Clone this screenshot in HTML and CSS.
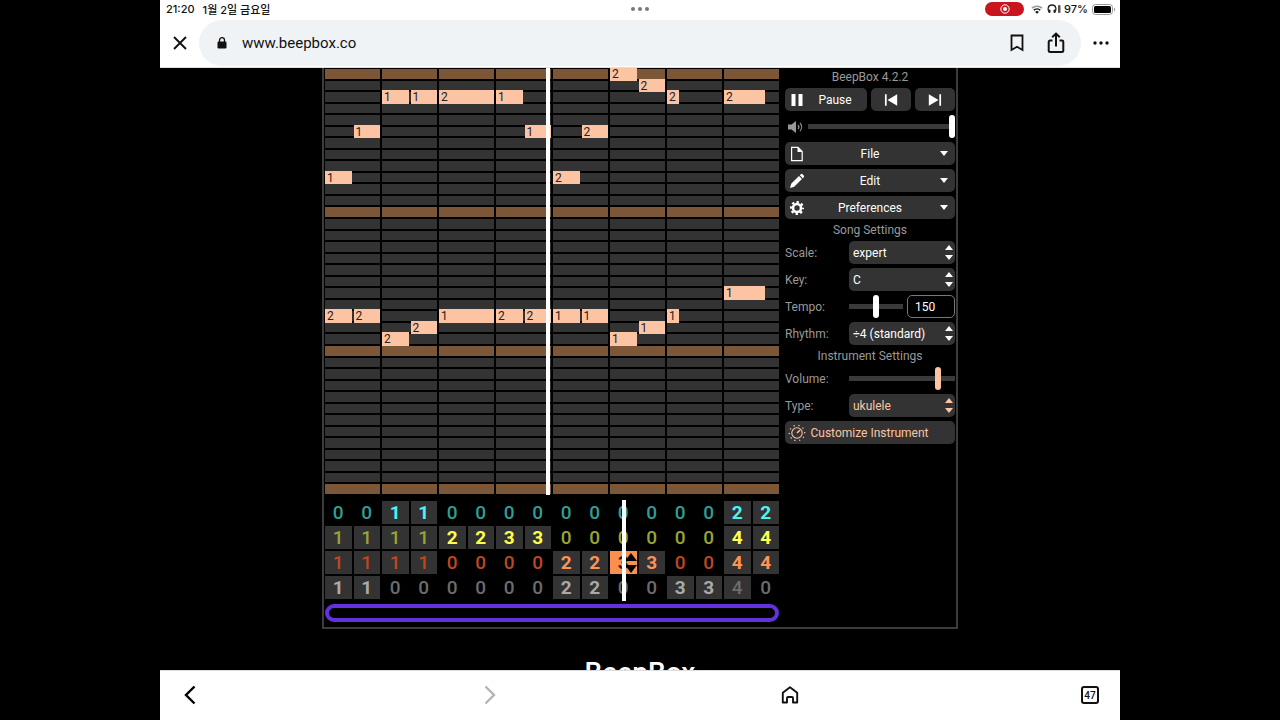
FILE: index.html
```html
<!DOCTYPE html>
<html lang="ko">
<head>
  <meta charset="UTF-8">
  <title>BeepBox</title>
  <link rel="stylesheet" href="styles.css">
</head>
<body>
  <div class="device">
    <div class="status">
      <span class="clock">21:20</span>
      <span>1월 2일 금요일</span>
      <svg class="multitask" width="20" height="6" viewBox="0 0 20 6" fill="#77787a"><circle cx="3" cy="3" r="2"/><circle cx="10" cy="3" r="2"/><circle cx="17" cy="3" r="2"/></svg>
      <span class="recording"><svg width="10" height="10" viewBox="0 0 10 10"><circle cx="5" cy="5" r="4.2" fill="none" stroke="#fff"/><circle cx="5" cy="5" r="2" fill="#fff"/></svg></span>
      <svg class="wifi" width="12" height="9" viewBox="0 0 12 9" fill="none" stroke-width="1.6"><path d="M1 3.2a7.2 7.2 0 0 1 10 0" stroke="#999"/><path d="M2.8 5.3a4.6 4.6 0 0 1 6.4 0" stroke="#111"/><path d="M6 8.8L4.2 7a2.5 2.5 0 0 1 3.6 0z" fill="#111"/></svg>
      <svg class="headphones" width="14" height="10" viewBox="0 0 14 10"><path d="M2.6 8.5C.2 6 .6 1 5 1s4.800 5 2.400 7.500" fill="none" stroke="#222" stroke-width="1.300"/><rect x="1.500" y="5.500" width="2" height="3.500" rx="1" fill="#222"/><rect x="6.500" y="5.500" width="2" height="3.500" rx="1" fill="#222"/><rect x="11" y="1" width="2.500" height="8" rx="1" fill="#555"/></svg>
      <span>97%</span>
      <svg class="battery" width="24" height="11" viewBox="0 0 24 11"><rect x=".5" y=".5" width="20" height="10" rx="3" fill="#fff" stroke="#999"/><rect x="2" y="2" width="17" height="7" rx="1.500" fill="#000"/><path d="M22 3.500c1.500.8 1.500 3.200 0 4z" fill="#999"/></svg>
    </div>

    <div class="toolbar">
      <button class="plain" aria-label="닫기"><svg width="16" height="16" viewBox="0 0 16 16" fill="none" stroke="#111" stroke-width="1.900"><path d="M2 2l12 12M14 2L2 14"/></svg></button>
      <div class="address">
        <svg width="10" height="12" viewBox="0 0 10 12"><rect x=".5" y="4.500" width="9" height="7" rx="1.200" fill="#111"/><path d="M2.500 5V3.200a2.500 2.500 0 0 1 5 0V5" fill="none" stroke="#111" stroke-width="1.300"/></svg>
        <input class="url" type="text" value="www.beepbox.co" aria-label="주소">
        <button class="plain" aria-label="북마크"><svg width="14" height="18" viewBox="0 0 14 18" fill="none" stroke="#111" stroke-width="1.800"><path d="M1.500 1.500h11v14.500L7 12.800 1.500 16z"/></svg></button>
        <button class="plain" aria-label="공유"><svg width="18" height="22" viewBox="0 0 18 22" fill="none" stroke="#111" stroke-width="2"><path d="M5.500 8.500H3a1.300 1.300 0 0 0-1.300 1.300V18.500A1.500 1.500 0 0 0 3.200 20h11.600a1.500 1.500 0 0 0 1.500-1.500V9.800A1.300 1.300 0 0 0 15 8.500h-2.500M9 14.500V2M5.200 5.300L9 1.600l3.800 3.700"/></svg></button>
      </div>
      <button class="plain" aria-label="더보기"><svg width="16" height="4" viewBox="0 0 16 4" fill="#111"><circle cx="2" cy="2" r="1.700"/><circle cx="8" cy="2" r="1.700"/><circle cx="14" cy="2" r="1.700"/></svg></button>
    </div>

    <main class="page">
      <div class="beepbox">
        <div class="editor">
          <div class="pattern" id="pattern"><div class="playhead pattern-head"></div></div>
          <div class="tracks" id="tracks"><div class="playhead track-head"></div></div>
          <div class="loop"></div>
        </div>

        <div class="settings">
          <div class="heading">BeepBox 4.2.2</div>
          <div class="row">
            <button class="btn pause"><svg width="12" height="14" viewBox="0 0 12 14" fill="#fff"><path d="M.5 1h4v12h-4zM7.500 1h4v12h-4z"/></svg><span>Pause</span></button>
            <button class="btn skip" aria-label="Previous bar"><svg width="14" height="14" viewBox="0 0 12 12" fill="#fff"><path d="M.8 1h1.500v10H.8zM11.300 1v10L3 6z"/></svg></button>
            <button class="btn skip" aria-label="Next bar"><svg width="14" height="14" viewBox="0 0 12 12" fill="#fff"><path d="M9.700 1h1.500v10H9.700zM.7 1v10L9 6z"/></svg></button>
          </div>
          <div class="row">
            <svg class="speaker" width="19" height="16" viewBox="0 0 19 16"><path d="M3 5.500h3.500L11 2v12l-4.500-3.500H3z" fill="#999"/><path d="M13 6a3 3 0 0 1 0 4M15 3.800a6.500 6.500 0 0 1 0 8.400" fill="none" stroke="#888" stroke-width="1.300"/></svg>
            <input class="range" type="range" min="0" max="100" value="100" aria-label="Main volume">
          </div>
          <div class="menu">
            <svg class="icon" width="16" height="16" viewBox="0 0 16 16"><path d="M2.600 1.300h6.400L13.200 5.500v9.200H2.600z" fill="none" stroke="#fff" stroke-width="1.200"/><path d="M8.500 1v5h5z" fill="#fff"/></svg>
            <select aria-label="File"><option>File</option></select>
            <svg class="caret" width="8" height="5" viewBox="0 0 8 5"><path d="M0 0h8L4 5z" fill="#fff"/></svg>
          </div>
          <div class="menu">
            <svg class="icon" width="16" height="16" viewBox="0 0 16 16" fill="#fff"><path d="M1 15l1.200-4.200L10 3l3 3-7.800 7.800zM10.800 2.200l1-1a1.200 1.200 0 0 1 1.700 0l1.300 1.300a1.200 1.200 0 0 1 0 1.700l-1 1z"/></svg>
            <select aria-label="Edit"><option>Edit</option></select>
            <svg class="caret" width="8" height="5" viewBox="0 0 8 5"><path d="M0 0h8L4 5z" fill="#fff"/></svg>
          </div>
          <div class="menu">
            <svg class="icon" width="16" height="16" viewBox="0 0 16 16" fill="none" stroke="#fff"><circle cx="8" cy="8" r="4" stroke-width="2.600"/><circle cx="8" cy="8" r="6" stroke-width="2" stroke-dasharray="2.400 2.312" stroke-dashoffset="1.200"/></svg>
            <select aria-label="Preferences"><option>Preferences</option></select>
            <svg class="caret" width="8" height="5" viewBox="0 0 8 5"><path d="M0 0h8L4 5z" fill="#fff"/></svg>
          </div>

          <div class="heading">Song Settings</div>
          <div class="row">
            <label for="scale">Scale:</label>
            <div class="select"><select id="scale"><option>expert</option></select><svg class="arrows" width="8" height="15" viewBox="0 0 8 15"><path d="M0 5h8L4 0zM0 10h8l-4 5z"/></svg></div>
          </div>
          <div class="row">
            <label for="key">Key:</label>
            <div class="select"><select id="key"><option>C</option></select><svg class="arrows" width="8" height="15" viewBox="0 0 8 15"><path d="M0 5h8L4 0zM0 10h8l-4 5z"/></svg></div>
          </div>
          <div class="row">
            <label for="tempo">Tempo:</label>
            <input class="range" type="range" min="0" max="100" value="50" aria-label="Tempo slider">
            <input class="number" id="tempo" type="text" value="150">
          </div>
          <div class="row">
            <label for="rhythm">Rhythm:</label>
            <div class="select"><select id="rhythm"><option>÷4 (standard)</option></select><svg class="arrows" width="8" height="15" viewBox="0 0 8 15"><path d="M0 5h8L4 0zM0 10h8l-4 5z"/></svg></div>
          </div>

          <div class="heading">Instrument Settings</div>
          <div class="row">
            <label for="volume">Volume:</label>
            <input class="range instrument" id="volume" type="range" min="0" max="100" value="86">
          </div>
          <div class="row">
            <label for="type">Type:</label>
            <div class="select instrument"><select id="type"><option>ukulele</option></select><svg class="arrows" width="8" height="15" viewBox="0 0 8 15"><path d="M0 5h8L4 0zM0 10h8l-4 5z"/></svg></div>
          </div>
          <button class="btn customize"><svg width="18" height="18" viewBox="0 0 18 18" fill="none" stroke="#fdc4a4"><circle cx="9" cy="9" r="5.200" stroke-width="1.100"/><path d="M9 9l2.800-2.800" stroke-width="1.500"/><circle cx="9" cy="9" r="7.700" stroke-width="1.300" stroke-dasharray="1.300 3.538" transform="rotate(135 9 9)"/></svg><span>Customize Instrument</span></button>
        </div>
      </div>
      <h1>BeepBox</h1>
    </main>

    <nav class="bottom">
      <button class="plain" aria-label="뒤로"><svg width="20" height="22" viewBox="0 0 20 22" fill="none" stroke="#000" stroke-width="2.400"><path d="M14.500 2.500L6 11l8.500 8.500"/></svg></button>
      <button class="plain" aria-label="앞으로"><svg width="20" height="22" viewBox="0 0 20 22" fill="none" stroke="#b4b4b4" stroke-width="2.400"><path d="M5.500 2.500L14 11l-8.500 8.500"/></svg></button>
      <button class="plain" aria-label="홈"><svg width="18" height="18" viewBox="0 0 18 18" fill="none" stroke="#111" stroke-width="1.900" stroke-linejoin="round"><path d="M1.800 6.700L9 1.300l7.200 5.400V16.500h-4.200v-4.500a1 1 0 0 0-1-1H7a1 1 0 0 0-1 1v4.500H1.800z"/></svg></button>
      <button class="plain tabs" aria-label="탭 47개">47</button>
    </nav>
  </div>

  <script>
    const ROWS = 37;
    const BEATS = 8;

    // [pitch row, start, length] in quarter beats, then the instrument number
    const notes = [
      [9, 0, 2, 1], [5, 2, 2, 1], [2, 4, 2, 1], [2, 6, 2, 1], [2, 8, 4, 2],
      [2, 12, 2, 1], [5, 14, 2, 1], [9, 16, 2, 2], [5, 18, 2, 2],
      [0, 20, 2, 2], [1, 22, 2, 2], [2, 24, 1, 2], [2, 28, 3, 2],
      [21, 0, 2, 2], [21, 2, 2, 2], [23, 4, 2, 2], [22, 6, 2, 2], [21, 8, 4, 1],
      [21, 12, 2, 2], [21, 14, 2, 2], [21, 16, 2, 1], [21, 18, 2, 1],
      [23, 20, 2, 1], [22, 22, 2, 1], [21, 24, 1, 1], [19, 28, 3, 1]
    ];

    // bars per channel; "on" marks the bars that are drawn bright
    const channels = [
      { name: 'pitch1', bars: '0011000000000022', on: '0011000000000011' },
      { name: 'pitch2', bars: '1111223300000044', on: '0000111100000011' },
      { name: 'pitch3', bars: '1111000022330044', on: '0000000011110011' },
      { name: 'noise',  bars: '1100000022003340', on: '1100000011001100' }
    ];
    const selected = { channel: 2, bar: 10 };

    const pattern = document.getElementById('pattern');
    for (let r = 0; r < ROWS; r++) {
      for (let b = 0; b < BEATS; b++) {
        const cell = document.createElement('div');
        cell.className = r % 12 === 0 ? 'cell root' : 'cell';
        cell.style.gridArea = `${r + 1} / ${b * 4 + 1} / span 1 / span 4`;
        pattern.append(cell);
      }
    }
    for (const [row, start, length, instrument] of notes) {
      const note = document.createElement('div');
      note.className = 'note';
      note.textContent = instrument;
      note.style.gridArea = `${row + 1} / ${start + 1} / span 1 / span ${length}`;
      pattern.append(note);
    }

    const tracks = document.getElementById('tracks');
    channels.forEach((channel, c) => {
      [...channel.bars].forEach((bar, i) => {
        const button = document.createElement('button');
        button.className = `bar ${channel.name}`;
        if (bar !== '0') button.classList.add('filled');
        if (channel.on[i] === '1') button.classList.add('on');
        button.textContent = bar;
        if (c === selected.channel && i === selected.bar) {
          button.classList.add('selected');
          button.innerHTML += '<svg class="spinner" width="12" height="20" viewBox="0 0 12 20"><path d="M0 8h12L6 0zM0 12h12l-6 8z"/></svg>';
        }
        tracks.append(button);
      });
    });
  </script>
</body>
</html>
```
FILE: styles.css
```css
* { box-sizing: border-box; }
body { margin: 0; background: #000; font-family: Roboto, "Noto Sans CJK KR", sans-serif; font-size: 12px; }
button, input, select { font: inherit; color: inherit; margin: 0; }
svg { display: block; flex: none; }
.device { width: 75%; height: 100vh; margin: 0 auto; display: flex; flex-direction: column; background: #fff; color: #111; }
.plain { display: flex; align-items: center; justify-content: center; padding: 0; border: 0; background: none; }

/* iPad status bar */
.status { position: relative; height: 18px; padding: 0 4px 0 6px; display: flex; align-items: center; font-family: Inter, "Noto Sans CJK KR", sans-serif; font-size: 11px; font-weight: 500; }
.clock { margin-right: 8px; }
.multitask { position: absolute; left: 50%; top: 6px; transform: translateX(-50%); }
.recording { margin-left: auto; width: 39px; height: 14px; border-radius: 7px; background: #c9151e; display: flex; align-items: center; justify-content: center; }
.wifi { margin: 0 4px 0 7px; }
.headphones { margin-right: 3px; }
.battery { margin-left: 4px; }

/* browser toolbar */
.toolbar { display: grid; grid-template-columns: 39px 1fr 39px; height: 50px; padding: 2px 0; border-bottom: 1px solid #ddd; }
.address { display: flex; align-items: center; gap: 15px; height: 46px; padding: 0 13px 0 18px; border-radius: 23px; background: #eff3f5; }
.address .plain { width: 24px; height: 24px; }
.url { flex: 1; min-width: 0; padding: 0; border: 0; background: none; font-size: 15px; }

.page { flex: 1; min-height: 0; overflow: hidden; background: #000; color: #fff; }
.beepbox { display: grid; grid-template-columns: 1fr 170px; gap: 4px; max-width: 636px; margin: 0 auto; padding: 0 1px; border: 2px solid #3c3c3c; border-top: 0; }
h1 { margin: 29px 0 0; font-size: 28px; font-weight: 500; line-height: 30px; text-align: center; }

.editor { padding-bottom: 5px; }
.pattern { position: relative; display: grid; grid-template-columns: repeat(32, 1fr); grid-template-rows: repeat(37, minmax(0, 1fr)); height: 427px; }
.cell { margin: 1px 2px 1px 0; background: #333; }
.root { background: #7b5637; }
.note { margin: -1px 2px -1px 0; padding-left: 2px; background: #fdc4a4; color: #222; font-size: 12px; line-height: 14px; }
.playhead { position: absolute; z-index: 1; width: 4px; background: #fff; }
.pattern-head { left: 221px; top: 0; bottom: 0; }

.tracks { position: relative; display: grid; grid-template-columns: repeat(16, 1fr); grid-auto-rows: 25px; margin-top: 6px; }
.track-head { left: 297px; top: -1px; bottom: 0; }
.bar { position: relative; margin: 0 2px 2px 0; padding: 0; border: 0; background: #000; font-size: 19px; font-weight: 500; line-height: 23px; text-align: center; }
.filled { background: #333; }
.on { font-weight: bold; }
.pitch1 { color: #2f9e96; }
.pitch1.on { color: #4df3f3; }
.pitch2 { color: #9ba336; }
.pitch2.on { color: #ffff50; }
.pitch3 { color: #bf4720; }
.pitch3.on { color: #fd9454; }
.noise { color: #6c6c6c; }
.noise.on { color: #aaa; }
.bar.selected { background: #fb8f4f; color: #222; }
.spinner { position: absolute; right: 0; top: 2px; }
.loop { height: 18px; margin: 3px 2px 0 0; border: 4px solid #6331dd; border-radius: 9px; }

/* settings column */
.settings { display: flex; flex-direction: column; gap: 4px; padding-top: 2px; color: #999; }
.heading { line-height: 14px; text-align: center; }
.row { display: flex; align-items: center; gap: 4px; height: 23px; }
.row label { width: 60px; }
.btn { display: flex; align-items: center; height: 23px; padding: 0; border: 0; border-radius: 5px; background: #333; color: #fff; }
.btn span { flex: 1; text-align: center; }
.pause { flex: 1; padding: 0 0 0 6px; }
.skip { width: 40px; justify-content: center; }
.menu, .select { position: relative; color: #fff; }
.select { flex: 1; }
.menu select, .select select { display: block; width: 100%; height: 23px; padding: 0 4px; border: 0; border-radius: 5px; background: #333; appearance: none; }
.menu select { text-align: center; text-align-last: center; }
.icon { position: absolute; left: 4px; top: 4px; }
.caret { position: absolute; right: 7px; top: 9px; }
.arrows { position: absolute; right: 2px; top: 4px; fill: currentColor; }
.number { width: 48px; height: 23px; padding: 0 7px; border: 1px solid #777; border-radius: 5px; background: #000; color: #fff; }
.select.instrument { color: #fdc4a4; }
.customize { padding: 0 22px 0 3px; color: #fdc4a4; }

.range { flex: 1; min-width: 0; height: 23px; appearance: none; background: none; color: #fff; }
.range::-webkit-slider-runnable-track { height: 5px; background: #3a3a3a; }
.range::-webkit-slider-thumb { appearance: none; width: 6px; height: 23px; margin-top: -9px; border-radius: 3px; background: currentColor; }
.range.instrument { color: #fdc4a4; }

/* browser bottom bar */
.bottom { display: flex; align-items: center; justify-content: space-between; height: 50px; padding: 0 15px 1px; border-top: 1px solid #ddd; }
.bottom .plain { width: 30px; height: 30px; }
.bottom .tabs { width: 18px; height: 18px; margin: 0 6px; border: 2px solid #111; border-radius: 3px; font-size: 10px; font-weight: 500; }
```
